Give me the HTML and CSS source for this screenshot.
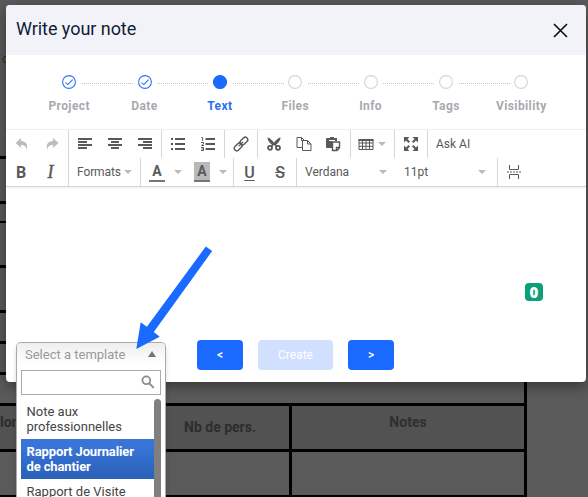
FILE: index.html
```html
<!DOCTYPE html>
<html lang="en">
<head>
<meta charset="utf-8">
<title>Write your note</title>
<link rel="stylesheet" href="styles.css">
</head>
<body>
<div class="page">
  <div class="page-text">c</div>
  <div class="report">
    <div class="row r1"></div>
    <div class="row r2"></div>
    <div class="row r3"></div>
    <div class="row r4"></div>
    <div class="row r5"></div>
    <div class="row r6"></div>
    <div class="row r7"></div>
    <div class="row cells head"><div class="cell first">lon</div><div class="cell pers">Nb de pers.</div><div class="cell notes">Notes</div></div>
    <div class="row cells"><div class="cell"></div><div class="cell"></div><div class="cell"></div></div>
    <div class="row end"></div>
  </div>
</div>

<div class="modal">
  <header class="modal-head">
    <h1>Write your note</h1>
    <svg class="close" width="15" height="15" viewBox="0 0 15 15"><path d="M1 1L14 14M14 1L1 14"/></svg>
  </header>

  <ol class="steps">
    <li class="step done"><svg class="dot" viewBox="0 0 14 14"><circle cx="7" cy="7" r="6.4"/><path d="M3.4 7.6L5.8 9.6L10.6 4.6"/></svg><span>Project</span></li>
    <li class="step done"><svg class="dot" viewBox="0 0 14 14"><circle cx="7" cy="7" r="6.4"/><path d="M3.4 7.6L5.8 9.6L10.6 4.6"/></svg><span>Date</span></li>
    <li class="step active"><svg class="dot" viewBox="0 0 14 14"><circle cx="7" cy="7" r="6.5"/></svg><span>Text</span></li>
    <li class="step"><svg class="dot" viewBox="0 0 14 14"><circle cx="7" cy="7" r="6.4"/></svg><span>Files</span></li>
    <li class="step"><svg class="dot" viewBox="0 0 14 14"><circle cx="7" cy="7" r="6.4"/></svg><span>Info</span></li>
    <li class="step"><svg class="dot" viewBox="0 0 14 14"><circle cx="7" cy="7" r="6.4"/></svg><span>Tags</span></li>
    <li class="step"><svg class="dot" viewBox="0 0 14 14"><circle cx="7" cy="7" r="6.4"/></svg><span>Visibility</span></li>
  </ol>

  <div class="toolbar">
    <div class="bar">
      <div class="group">
        <div class="btn off"><svg class="ic" viewBox="0 0 16 16"><path class="f" d="M7 2V5C12 5 14.500 8.500 12.500 14C12.500 10.500 10.500 9 7 9V12L1.500 7Z"/></svg></div>
        <div class="btn off"><svg class="ic" viewBox="0 0 16 16"><path class="f" d="M9 2V5C4 5 1.500 8.500 3.500 14C3.500 10.500 5.500 9 9 9V12L14.500 7Z"/></svg></div>
      </div>
      <div class="group">
        <div class="btn"><svg class="ic" viewBox="0 0 16 16"><path class="f" d="M1 2h14v2H1zM1 5h9v2H1zM1 8h14v2H1zM1 11h9v2H1z"/></svg></div>
        <div class="btn"><svg class="ic" viewBox="0 0 16 16"><path class="f" d="M1 2h14v2H1zM4 5h8v2H4zM1 8h14v2H1zM4 11h8v2H4z"/></svg></div>
        <div class="btn"><svg class="ic" viewBox="0 0 16 16"><path class="f" d="M1 2h14v2H1zM6 5h9v2H6zM1 8h14v2H1zM6 11h9v2H6z"/></svg></div>
      </div>
      <div class="group">
        <div class="btn"><svg class="ic" viewBox="0 0 16 16"><path class="f" d="M1 2h2v2H1zM5 2h10v2H5zM1 7h2v2H1zM5 7h10v2H5zM1 12h2v2H1zM5 12h10v2H5z"/></svg></div>
        <div class="btn"><svg class="ic" viewBox="0 0 16 16"><path class="f" d="M5.500 2h9.500v2H5.500zM5.500 7h9.500v2H5.500zM5.500 12h9.500v2H5.500z"/><path class="s" d="M1.500 1.500H2.600V5M1 6.500H3.500V8L1.500 9.500H4M1 11.500H3.500V14.500H1M1.500 13H3.500"/></svg></div>
      </div>
      <div class="group">
        <div class="btn"><svg class="ic" viewBox="0 0 16 16"><g class="s w" transform="rotate(-45 8 8)"><rect x="-.5" y="5.500" width="9" height="5" rx="2.500"/><rect x="7.500" y="5.500" width="9" height="5" rx="2.500"/><path d="M5 8h6"/></g></svg></div>
      </div>
      <div class="group">
        <div class="btn"><svg class="ic" viewBox="0 0 16 16"><path class="f" d="M1.500 1.500C4 2 7.500 5.500 8 7C8.500 5.500 12 2 14.500 1.500C14.500 5 11.500 7.500 9.500 9H6.500C4.500 7.500 1.500 5 1.500 1.500Z"/><path class="s ww" d="M7 8.500L5.500 10.500M9 8.500L10.500 10.500"/><circle class="s ww" cx="4" cy="11.800" r="2"/><circle class="s ww" cx="12" cy="11.800" r="2"/></svg></div>
        <div class="btn"><svg class="ic" viewBox="0 0 16 16"><path class="s" d="M6.500 11.500H1V1.500H5.500L8.500 4.500M5.500 1.500V4.500H8.500M6.500 4.500H11.500L15 8V14.500H6.500ZM11.500 4.500V8H15"/></svg></div>
        <div class="btn"><svg class="ic paste" viewBox="0 0 16 16"><path class="f" fill-rule="evenodd" d="M2 2h3V1h4v1h3v3h-2v-1H4v1h3v7H2Q1 12 1 11V3Q1 2 2 2Z"/><path class="s w" d="M7.500 6H14.500V12L12 14.500H7.500ZM11.500 14V11.500H14"/></svg></div>
      </div>
      <div class="group">
        <div class="btn wide"><svg class="ic" viewBox="0 0 16 16"><path class="s" d="M1 3.500H15V13.500H1ZM1 7H15M1 10.300H15M4.500 4V13M8 4V13M11.500 4V13"/><path class="f" d="M.5 3h15v2H.5z"/></svg><i class="caret"></i></div>
      </div>
      <div class="group">
        <div class="btn"><svg class="ic" viewBox="0 0 16 16"><path class="f" d="M1 1H6.500L4.500 3L7 5.500L5.500 7L3 4.500L1 6.500ZM15 1V6.500L13 4.500L10.500 7L9 5.500L11.500 3L9.500 1ZM1 15V9.500L3 11.500L5.500 9L7 10.500L4.500 13L6.500 15ZM15 15H9.500L11.500 13L9 10.500L10.500 9L13 11.500L15 9.500Z"/></svg></div>
      </div>
      <div class="label ask">Ask AI</div>
    </div>
    <div class="bar">
      <div class="group">
        <div class="btn bold">B</div>
        <div class="btn italic">I</div>
      </div>
      <div class="group"><div class="btn formats">Formats<i class="caret"></i></div></div>
      <div class="group">
        <div class="btn color"><span class="swatch">A</span><i class="caret"></i></div>
        <div class="btn color"><span class="swatch back">A</span><i class="caret"></i></div>
      </div>
      <div class="group">
        <div class="btn under">U</div>
        <div class="btn strike">S</div>
      </div>
      <div class="group">
        <div class="btn list">Verdana<i class="caret"></i></div>
        <div class="btn list">11pt<i class="caret"></i></div>
      </div>
      <div class="btn last"><svg class="ic" viewBox="0 0 16 16"><path class="s" d="M3.500 1V5.500H12.500V1M3.500 15V10.500H12.500V15M1 8H3M4 8H6M7 8H9M10 8H12M13 8H15"/></svg></div>
    </div>
  </div>

  <div class="editor"><span class="count">0</span></div>

  <footer class="actions">
    <button class="nav">&lt;</button>
    <button class="create">Create</button>
    <button class="nav">&gt;</button>
  </footer>
</div>

<div class="select">
  <div class="select-head"><span>Select a template</span><i class="up"></i></div>
  <div class="search"><svg width="14" height="14" viewBox="0 0 14 14"><circle cx="5.300" cy="5.300" r="3.900"/><path d="M8 8L12.800 12.800"/></svg></div>
  <div class="options">
    <ul>
      <li>Note aux professionnelles</li>
      <li class="hot">Rapport Journalier de chantier</li>
      <li class="end">Rapport de Visite</li>
    </ul>
    <div class="scroll"></div>
  </div>
</div>

<svg class="arrow" width="80" height="106" viewBox="134 245 80 106"><path d="M205.800 246.500L212.200 251L153.800 332L159.700 336.700L136.300 349L140.700 322.300L146.900 326.800Z"/></svg>
</body>
</html>
```
FILE: styles.css
```css
* { box-sizing: border-box; }
body {
  margin: 0;
  width: 588px;
  height: 497px;
  position: relative;
  overflow: hidden;
  background: #5a5a5a;
  font-family: Roboto, "Liberation Sans", sans-serif;
}
h1, ol, ul { margin: 0; padding: 0; font-weight: 400; list-style: none; }

/* dimmed page */
.page { height: 497px; overflow: hidden; color: #2b2d30; }
.page-text { height: 156px; padding: 51px 0 0 2px; font-size: 13px; line-height: 16px; color: #3c302c; }
.report { width: 527px; border-right: 3px solid #000; }
.row { height: 31px; border-top: 3px solid #000; }
.r1 { height: 45px; }
.r2 { height: 20px; }
.r3 { height: 44px; border-top-width: 2px; }
.r4 { height: 45px; }
.cells { height: 46px; display: grid; grid-template-columns: 150px 139px 235px; font-size: 14px; font-weight: 700; line-height: 16px; }
.cell { text-align: center; padding-top: 8px; }
.cell + .cell + .cell { border-left: 3px solid #000; }
.head { background: #525252; }
.head .first { text-align: left; }
.head .pers { padding-top: 13px; padding-left: 1px; }
.head .notes { color: #302f2f; }
.row.end { height: 2px; border-top-width: 2px; }

/* dialog */
.modal {
  position: absolute;
  left: 6px;
  top: 5px;
  width: 580px;
  height: 377px;
  background: #fff;
  border-radius: 4px;
  box-shadow: 0 4px 14px rgba(0, 0, 0, .4);
  overflow: hidden;
}
.modal-head { height: 50px; padding: 0 18px 0 10px; background: #f2f3f8; display: flex; align-items: center; justify-content: space-between; }
h1 { font-size: 18px; line-height: 24px; color: #111b38; margin-top: -2px; letter-spacing: -.05px; }
.close { fill: none; stroke: #080d1c; stroke-width: 1.600; }

.steps { height: 74px; padding: 20px 27px 0 25.500px; display: grid; grid-template-columns: repeat(7, 1fr); }
.step { position: relative; display: flex; flex-direction: column; align-items: center; gap: 9px; color: #a9a9af; font-size: 12px; font-weight: 700; line-height: 16px; letter-spacing: .4px; }
.step + .step::before { content: ""; position: absolute; top: 8px; left: -25px; width: 51px; border-top: 1px dotted #c4c4c4; }
.dot { width: 14px; height: 14px; fill: none; stroke: #d4d4d4; stroke-width: 1.100; }
.done .dot { stroke: #2d72ff; }
.active .dot { fill: #1a6aff; stroke: #1a6aff; }
.active { color: #2a70f4; }

.toolbar { border-top: 1px solid #f0f0f0; border-bottom: 1px solid #d5d5d5; height: 58px; box-shadow: 0 1px 2px #eee; color: #595959; }
.bar { height: 28px; display: flex; font-size: 12px; }
.group { display: flex; padding: 0 1px; border-right: 1px solid #d6d6d6; }
.btn { width: 30px; height: 28px; display: flex; align-items: center; justify-content: center; }
.off { color: #bdbdbd; }
.ic { width: 16px; height: 16px; overflow: visible; }
.paste { margin-left: -2px; }
.f { fill: currentColor; }
.s { fill: none; stroke: currentColor; stroke-width: 1; }
.s.w { stroke-width: 1.400; }
.s.ww { stroke-width: 1.800; }
.caret { width: 0; height: 0; border: 4px solid transparent; border-top-color: #b5bbc1; border-bottom: 0; }
.wide { width: 41px; gap: 4px; padding-right: 1px; }
.label { display: flex; align-items: center; padding-left: 8px; }
.formats { width: 69px; justify-content: space-between; padding: 0 7px 0 7px; letter-spacing: -.1px; }
.color { width: 45px; justify-content: space-between; padding: 0 5px 0 7px; }
.swatch { width: 16px; height: 20px; border-bottom: 2px solid #757575; text-align: center; font-size: 14px; font-weight: 700; line-height: 19px; }
.back { background: linear-gradient(#b9b9b9, #b9b9b9) 0 0 / 16px 18px no-repeat; }
.bold, .under, .strike { font-size: 16px; font-weight: 700; }
.bold { padding-right: 2px; }
.under, .strike { font-weight: 500; }
.under { text-decoration: underline; text-underline-offset: 2px; padding-right: 1px; }
.strike { text-decoration: line-through; }
.italic { font: italic 400 18px "Liberation Serif", serif; padding-right: 3px; -webkit-text-stroke: .4px #595959; }
.list { width: 99px; justify-content: space-between; padding: 0 10px 0 7px; }
.last { width: 33px; padding-right: 2px; }

.editor { height: 148px; position: relative; }
.count { position: absolute; left: 519px; top: 96px; width: 18px; height: 18px; border-radius: 4px; background: #0c9f78; color: #fff; text-align: center; font: 800 15px/18px "Open Sans", sans-serif; }

.actions { display: flex; gap: 15px; padding: 5px 0 0 191px; }
button { height: 30px; padding: 0; border: 0; border-radius: 4px; background: #1a6aff; color: #fff; font: 500 12px/28px Roboto, sans-serif; }
.nav { width: 46px; }
.create { width: 75px; background: #d1e0ff; font-weight: 400; }

/* template chooser */
.select { position: absolute; left: 16px; top: 342px; width: 150px; height: 155px; padding: 0 4px; background: #fff; border: 1px solid #aaa; border-bottom: 0; border-radius: 5px 5px 0 0; box-shadow: 0 4px 5px rgba(0, 0, 0, .15); font-size: 13px; line-height: 15px; color: #444; }
.select-head { height: 27px; margin: 0 -4px; padding: 0 9px 5px 8px; display: flex; align-items: center; justify-content: space-between; border-radius: 4px 4px 0 0; background: linear-gradient(#eee, #fff 80%); color: #999; }
.up { width: 0; height: 0; border: 4px solid transparent; border-bottom: 6px solid #777; border-top: 0; }
.search { height: 25px; border: 1px solid #aaa; display: flex; align-items: center; justify-content: flex-end; padding-right: 5px; }
.search svg { fill: none; stroke: #8c8c8c; stroke-width: 1.800; margin-top: -2px; }
.options { display: flex; margin-top: 4px; }
.options ul { width: 133px; }
.options li { height: 40px; padding: 5px 6px 5px 5.500px; }
.options li.end { height: 18px; padding-bottom: 0; }
.options .hot { background: linear-gradient(#3875d7 20%, #2a62bc 90%); color: #fff; font-weight: 700; letter-spacing: -.12px; }
.scroll { width: 7px; height: 98px; border-radius: 4px 4px 0 0; background: #7f7f7f; }

.arrow { position: absolute; left: 134px; top: 245px; fill: #1a6aff; }
```
